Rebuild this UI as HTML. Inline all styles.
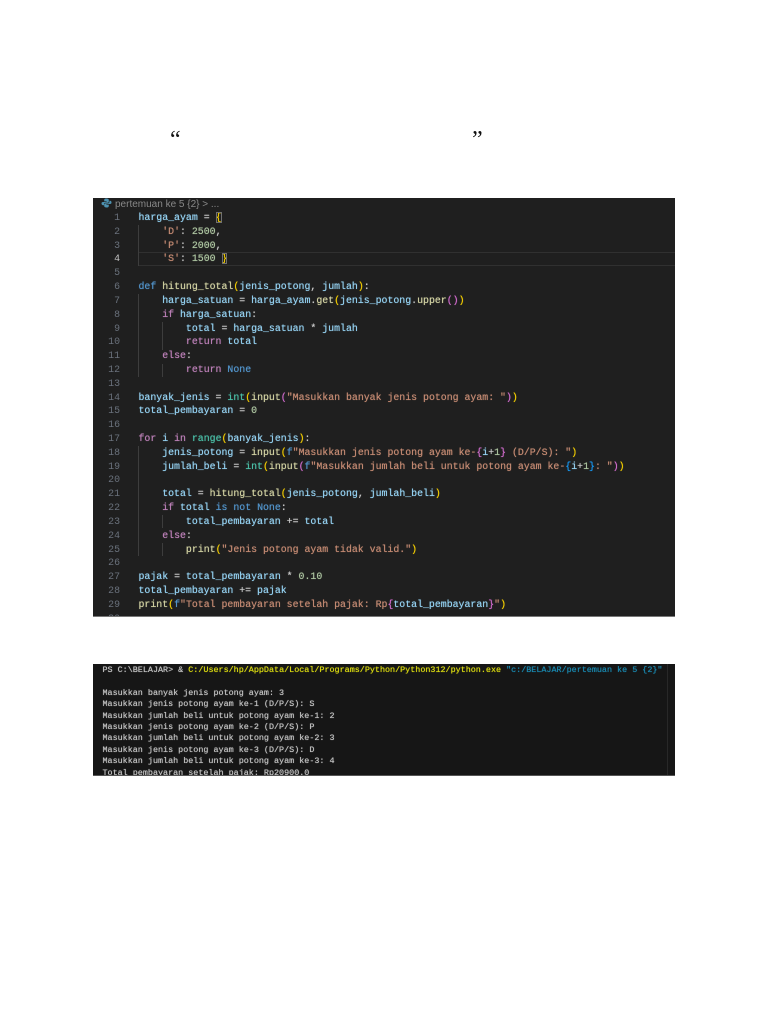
<!DOCTYPE html>
<html lang="id">
<head>
<meta charset="utf-8">
<title>Pertemuan ke 5</title>
<style>
html,body{margin:0;padding:0;background:#fff;width:768px;height:1024px;overflow:hidden}
.q{position:absolute;font-family:"Liberation Serif",serif;font-size:24px;line-height:28px;color:#111}
#ed{position:absolute;left:93px;top:198px;width:582px;height:419px;background:#1f1f1f;overflow:hidden;border-bottom:1px solid #777;box-sizing:border-box}
#inner{position:absolute;left:0;top:0;width:582px;height:418px;filter:blur(.35px) brightness(.95)}
pre{margin:0;position:absolute;font-family:"Liberation Mono",monospace;white-space:pre}
#nums{left:0;top:13px;width:27px;text-align:right;font-size:9.9px;line-height:13.82px;color:#6e7681}
#nums b{font-weight:normal;color:#ccc}
#code{left:45.5px;top:13px;font-size:9.9px;line-height:13.82px;color:#9cdcfe;font-weight:normal;text-shadow:0 0 .6px currentColor}
#crumb{position:absolute;left:22px;top:0;font-family:"Liberation Sans",sans-serif;font-size:10px;line-height:13px;color:#8f8f8f;white-space:pre}
.g{position:absolute;width:1px;background:#404040}
.k{color:#c586c0}.b{color:#569cd6}.f{color:#dcdcaa}.s{color:#ce9178}.n{color:#b5cea8}.t{color:#4ec9b0}.o{color:#d4d4d4}
.y{color:#ffd700}.p{color:#da70d6}.l{color:#179fff}
.box{outline:1px solid #777;outline-offset:-1px}
#term{position:absolute;left:93px;top:664px;width:582px;height:112px;background:#161616;overflow:hidden;border-bottom:1px solid #555;box-sizing:border-box}
#terminner{position:absolute;left:0;top:0;width:582px;height:112px;filter:blur(.35px) brightness(.95)}
#t1{left:9.5px;top:.8px;font-size:8.42px;line-height:11.43px;color:#cccccc;font-weight:normal;text-shadow:0 0 .6px currentColor}
.ty{color:#e5e510}.tb{color:#1a8fb8}
</style>
</head>
<body>
<div class="q" style="left:170px;top:126px">“</div>
<div class="q" style="left:472px;top:126px">”</div>

<div id="ed"><div id="inner">
<svg style="position:absolute;left:8px;top:0" width="11" height="10" viewBox="0 0 11 10"><path d="M5.5 0.5C3.5 .5 3.2 1.3 3.2 2.4V3.4H5.6V4H2C1 4 .5 4.6 .5 5.5S1 7.2 2 7.2H3V6C3 5.2 3.6 4.8 4.4 4.8H6.6C7.3 4.8 7.8 4.3 7.8 3.6V2C7.8 1 6.9 .5 5.5 .5Z" fill="#519aba"/><path d="M5.5 9.5C7.5 9.5 7.8 8.7 7.8 7.6V6.6H5.4V6H9C10 6 10.5 5.4 10.5 4.5S10 2.8 9 2.8H8.4V4C8.4 4.8 7.8 5.4 7 5.4H4.4C3.7 5.4 3.2 5.8 3.2 6.4V8C3.2 9 4.1 9.5 5.5 9.5Z" fill="#519aba"/></svg>
<div id="crumb">pertemuan ke 5 {2} &gt; ...</div>
<div style="position:absolute;left:45px;top:54px;width:537px;height:14px;border-top:1px solid #333;border-bottom:1px solid #333;box-sizing:border-box"></div>
<div class="g" style="left:45px;top:27px;height:41px"></div>
<div class="g" style="left:45px;top:96px;height:83px"></div>
<div class="g" style="left:69px;top:124px;height:28px"></div>
<div class="g" style="left:69px;top:166px;height:13px"></div>
<div class="g" style="left:45px;top:248px;height:110px"></div>
<div class="g" style="left:69px;top:317px;height:13px"></div>
<div class="g" style="left:69px;top:345px;height:13px"></div>
<pre id="nums">1
2
3
<b>4</b>
5
6
7
8
9
10
11
12
13
14
15
16
17
18
19
20
21
22
23
24
25
26
27
28
29
30</pre>
<pre id="code">harga_ayam <span class="o">=</span> <span class="y box">{</span>
    <span class="s">'D'</span><span class="o">:</span> <span class="n">2500</span><span class="o">,</span>
    <span class="s">'P'</span><span class="o">:</span> <span class="n">2000</span><span class="o">,</span>
    <span class="s">'S'</span><span class="o">:</span> <span class="n">1500</span> <span class="y box">}</span>

<span class="b">def</span> <span class="f">hitung_total</span><span class="y">(</span>jenis_potong<span class="o">,</span> jumlah<span class="y">)</span><span class="o">:</span>
    harga_satuan <span class="o">=</span> harga_ayam<span class="o">.</span><span class="f">get</span><span class="y">(</span>jenis_potong<span class="o">.</span><span class="f">upper</span><span class="p">()</span><span class="y">)</span>
    <span class="k">if</span> harga_satuan<span class="o">:</span>
        total <span class="o">=</span> harga_satuan <span class="o">*</span> jumlah
        <span class="k">return</span> total
    <span class="k">else</span><span class="o">:</span>
        <span class="k">return</span> <span class="b">None</span>

banyak_jenis <span class="o">=</span> <span class="t">int</span><span class="y">(</span><span class="f">input</span><span class="p">(</span><span class="s">"Masukkan banyak jenis potong ayam: "</span><span class="p">)</span><span class="y">)</span>
total_pembayaran <span class="o">=</span> <span class="n">0</span>

<span class="k">for</span> i <span class="k">in</span> <span class="t">range</span><span class="y">(</span>banyak_jenis<span class="y">)</span><span class="o">:</span>
    jenis_potong <span class="o">=</span> <span class="f">input</span><span class="y">(</span><span class="b">f</span><span class="s">"Masukkan jenis potong ayam ke-</span><span class="p">{</span>i<span class="o">+</span><span class="n">1</span><span class="p">}</span><span class="s"> (D/P/S): "</span><span class="y">)</span>
    jumlah_beli <span class="o">=</span> <span class="t">int</span><span class="y">(</span><span class="f">input</span><span class="p">(</span><span class="b">f</span><span class="s">"Masukkan jumlah beli untuk potong ayam ke-</span><span class="l">{</span>i<span class="o">+</span><span class="n">1</span><span class="l">}</span><span class="s">: "</span><span class="p">)</span><span class="y">)</span>

    total <span class="o">=</span> <span class="f">hitung_total</span><span class="y">(</span>jenis_potong<span class="o">,</span> jumlah_beli<span class="y">)</span>
    <span class="k">if</span> total <span class="b">is</span> <span class="b">not</span> <span class="b">None</span><span class="o">:</span>
        total_pembayaran <span class="o">+=</span> total
    <span class="k">else</span><span class="o">:</span>
        <span class="f">print</span><span class="y">(</span><span class="s">"Jenis potong ayam tidak valid."</span><span class="y">)</span>

pajak <span class="o">=</span> total_pembayaran <span class="o">*</span> <span class="n">0.10</span>
total_pembayaran <span class="o">+=</span> pajak
<span class="f">print</span><span class="y">(</span><span class="b">f</span><span class="s">"Total pembayaran setelah pajak: Rp</span><span class="p">{</span>total_pembayaran<span class="p">}</span><span class="s">"</span><span class="y">)</span></pre>
</div></div>

<div id="term"><div id="terminner">
<div style="position:absolute;left:574px;top:0;width:1px;height:112px;background:#2a2a2a"></div>
<pre id="t1">PS C:\BELAJAR&gt; &amp; <span class="ty">C:/Users/hp/AppData/Local/Programs/Python/Python312/python.exe</span> <span class="tb">"c:/BELAJAR/pertemuan ke 5 {2}"</span>

Masukkan banyak jenis potong ayam: 3
Masukkan jenis potong ayam ke-1 (D/P/S): S
Masukkan jumlah beli untuk potong ayam ke-1: 2
Masukkan jenis potong ayam ke-2 (D/P/S): P
Masukkan jumlah beli untuk potong ayam ke-2: 3
Masukkan jenis potong ayam ke-3 (D/P/S): D
Masukkan jumlah beli untuk potong ayam ke-3: 4
Total pembayaran setelah pajak: Rp20900.0</pre>
</div></div>
</body>
</html>
